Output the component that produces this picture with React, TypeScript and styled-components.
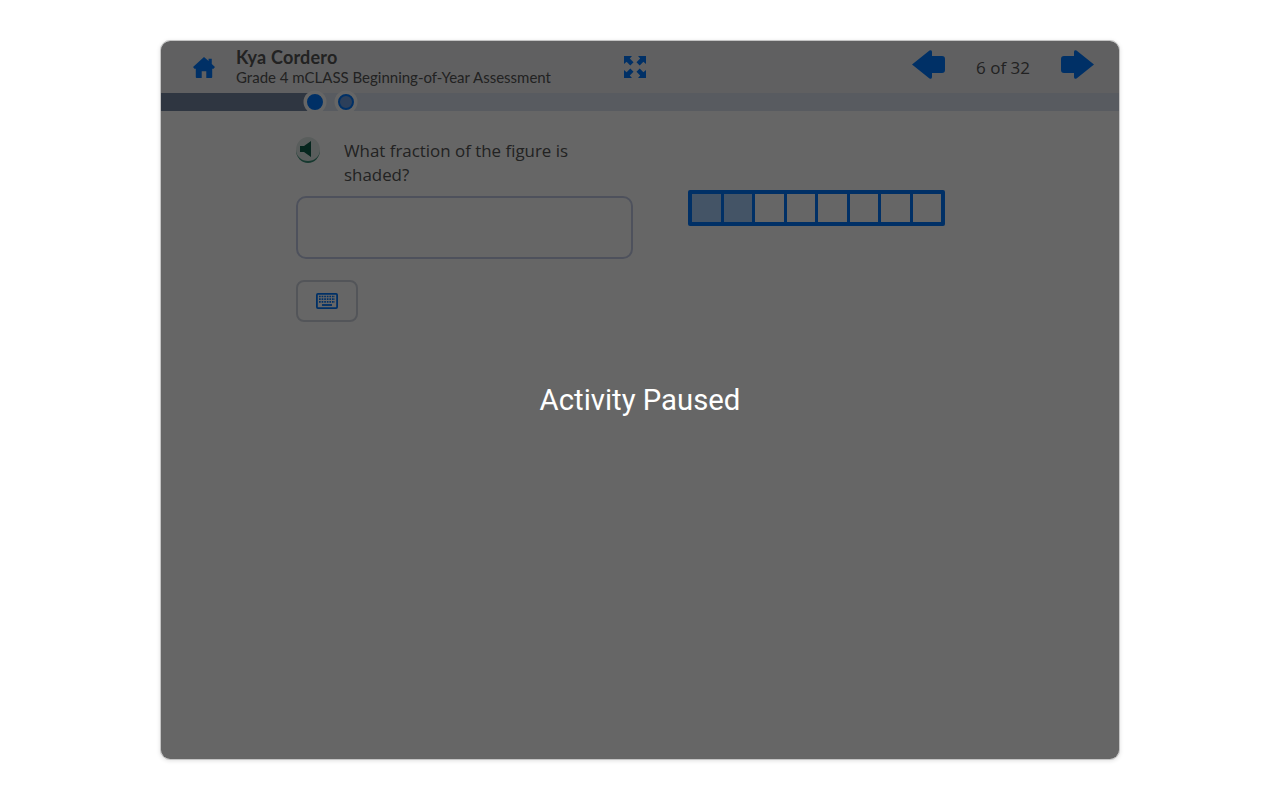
import styled, { createGlobalStyle } from "styled-components";

const GlobalStyle = createGlobalStyle`
  html, body { margin: 0; height: 100%; background: #fff; }
  #root { height: 100%; }
  * { box-sizing: border-box; }
`
const Page = styled.div`
  height: 800px;
  display: flex;
  align-items: center;
  justify-content: center;
`
const Card = styled.main`
  width: 960px;
  height: 720px;
  position: relative;
  overflow: hidden;
  display: flex;
  flex-flow: column;
  background: #fff;
  border: 1px solid #c4c4c4;
  border-radius: 10px;
  box-shadow: 0 1px 4px rgba(0, 0, 0, .12);
`
const Header = styled.header`
  height: 52px;
  padding: 0 24px 0 32px;
  display: flex;
  align-items: center;
  background: #eff0f2;
`
const HomeButton = styled.span`
  width: 22px;
  display: flex;
  margin-right: 21px;
`
const Titles = styled.div`
  width: 388px;
  color: #555;
`
const Name = styled.div`
  font: 700 18px/20px Lato, sans-serif;
  letter-spacing: .2px;
`
const Subtitle = styled.div`
  font: 400 15px/20px Lato, sans-serif;
  white-space: nowrap;
`
const IconButton = styled.span`
  display: flex;
`
const Pager = styled.nav`
  margin: -5px 0 0 auto;
  display: flex;
  align-items: center;
  gap: 31px;
`
const Count = styled.span`
  font: 400 17px/24px "Open Sans", sans-serif;
  color: #555;
  padding-top: 7px;
`
const Track = styled.div`
  height: 18px;
  position: relative;
  background: #dde4ef;
`
const Fill = styled.div`
  width: 154px;
  height: 100%;
  background: #7587a4;
`
const Dot = styled.span<{ $left: number; $current?: boolean }>`
  position: absolute;
  top: 1px;
  left: ${({ $left }) => $left}px;
  width: 16px;
  height: 16px;
  border-radius: 50%;
  background: ${({ $current }) => ($current ? "#0078ff" : "#6f9fe0")};
  border: 2px solid #0078ff;
  box-shadow: 0 0 0 3.5px #fff;
`
const Body = styled.section`
  flex: 1;
  padding: 28px 0 0 135px;
  display: flex;
  gap: 55px;
`
const QuestionColumn = styled.div`
  width: 337px;
`
const Prompt = styled.div`
  display: flex;
  gap: 24px;
  font: 400 16.9px/24px "Open Sans", sans-serif;
  color: #555;
`
const Speaker = styled.span`
  flex: none;
  width: 24px;
  height: 26px;
  margin-top: -2px;
  border-radius: 50%;
  background: #dfe9e6;
  border-bottom: 2px solid #3b8f78;
  display: flex;
  align-items: center;
  justify-content: center;
  padding-right: 4px;
`
const AnswerBox = styled.div`
  height: 63px;
  margin-top: 9px;
  border: 2px solid #c2cbe6;
  border-radius: 10px;
  background: #fff;
`
const KeyboardButton = styled.button`
  width: 62px;
  height: 42px;
  margin-top: 21px;
  padding: 0;
  background: #fff;
  border: 2px solid #d0d5df;
  border-radius: 8px;
  display: flex;
  align-items: center;
  justify-content: center;
`
const Figure = styled.div`
  width: 257px;
  height: 36px;
  margin-top: 51px;
  padding: 4px;
  display: grid;
  grid-template-columns: repeat(8, 1fr);
  gap: 3px;
  background: #0078ff;
  border-radius: 2px;
`
const Cell = styled.span<{ $shaded?: boolean }>`
  background: ${({ $shaded }) => ($shaded ? "#aad2ff" : "#fff")};
`
const Overlay = styled.div`
  position: absolute;
  inset: 0;
  background: rgba(0, 0, 0, .6);
  display: flex;
  align-items: center;
  justify-content: center;
  color: #fff;
  font: 400 29.3px/40px Roboto, sans-serif;
`

const HomeIcon = () => (
  <svg width="22" height="21" viewBox="0 0 24 23" fill="#0078ff">
    <path d="M12 0 L17 4.5 V2 H20.5 V7.6 L24 11 L22.5 13 H21 V22 Q21 23 20 23 H14.5 V15.5 H9.5 V23 H4 Q3 23 3 22 V13 H1.5 L0 11 Z" />
  </svg>
)

const Arrow = ({ flip }: { flip?: boolean }) => (
  <svg width="34" height="29" viewBox="0 0 34 29" style={flip ? undefined : { transform: "scaleX(-1)" }}>
    <path
      d="M1 14.5 L18.5 0.6 Q21 -0.6 21 2 V6 H31 Q34 6 34 9 V20 Q34 23 31 23 H21 V27 Q21 29.6 18.5 28.4 Z"
      fill="#0078ff"
    />
  </svg>
)

const Expand = () => (
  <svg width="22" height="22" viewBox="0 0 22 22" fill="#0078ff">
    <path d="M0 0 H8 L5.8 2.6 L9.5 6.3 L6.3 9.5 L2.6 5.8 L0 8 Z" />
    <path d="M22 0 H14 L16.2 2.6 L12.5 6.3 L15.7 9.5 L19.4 5.8 L22 8 Z" />
    <path d="M0 22 H8 L5.8 19.4 L9.5 15.7 L6.3 12.5 L2.6 16.2 L0 14 Z" />
    <path d="M22 22 H14 L16.2 19.4 L12.5 15.7 L15.7 12.5 L19.4 16.2 L22 14 Z" />
  </svg>
)

const SpeakerIcon = () => (
  <svg width="14" height="18" viewBox="0 0 14 18" fill="#0f5f4c">
    <path d="M1 6 H5 L12 1 V17 L5 12 H1 Z" />
  </svg>
)

const KeyboardIcon = () => (
  <svg width="22" height="16" viewBox="0 0 22 16">
    <rect x="0.9" y="0.9" width="20.2" height="14.2" rx="1" fill="none" stroke="#0078ff" strokeWidth="1.8" />
    <path
      d="M3 3.5 H19 M3 6.2 H19 M3 8.9 H19"
      stroke="#0078ff"
      strokeWidth="1.7"
      strokeDasharray="1.7 .9"
    />
    <path d="M6 12 H16" stroke="#0078ff" strokeWidth="1.8" />
  </svg>
)

export default function App() {
  return (
    <Page>
      <GlobalStyle />
      <Card>
        <Header>
          <HomeButton><HomeIcon /></HomeButton>
          <Titles>
            <Name>Kya Cordero</Name>
            <Subtitle>Grade 4 mCLASS Beginning-of-Year Assessment</Subtitle>
          </Titles>
          <IconButton><Expand /></IconButton>
          <Pager>
            <Arrow flip />
            <Count>6 of 32</Count>
            <Arrow />
          </Pager>
        </Header>
        <Track>
          <Fill />
          <Dot $left={146} $current />
          <Dot $left={177} />
        </Track>
        <Body>
          <QuestionColumn>
            <Prompt>
              <Speaker><SpeakerIcon /></Speaker>
              <span>What fraction of the figure is<br />shaded?</span>
            </Prompt>
            <AnswerBox />
            <KeyboardButton aria-label="Keyboard"><KeyboardIcon /></KeyboardButton>
          </QuestionColumn>
          <Figure>
            {[0, 1, 2, 3, 4, 5, 6, 7].map((i) => (
              <Cell key={i} $shaded={i < 2} />
            ))}
          </Figure>
        </Body>
        <Overlay>Activity Paused</Overlay>
      </Card>
    </Page>
  )
}
